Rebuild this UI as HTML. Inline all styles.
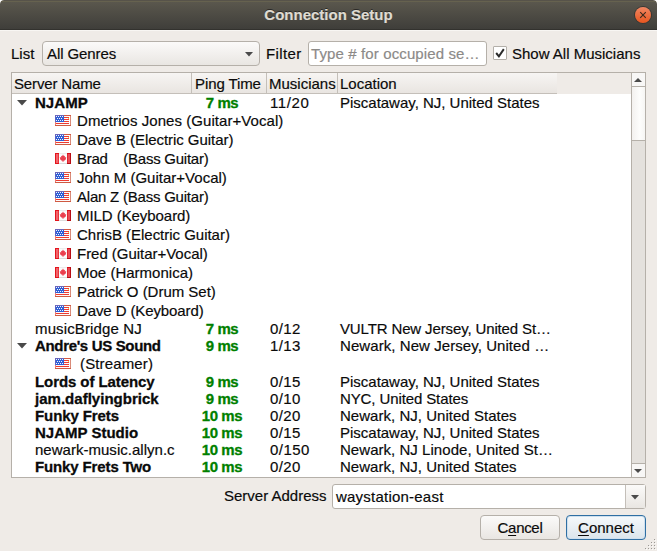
<!DOCTYPE html>
<html><head><meta charset="utf-8"><title>Connection Setup</title>
<style>
html,body{margin:0;padding:0;background:#fff;}
body{width:657px;height:551px;overflow:hidden;position:relative;font-family:"Liberation Sans", sans-serif;font-size:15px;color:#0a0a0a;-webkit-text-stroke:0.18px;}
#win{position:absolute;left:0;top:0;width:657px;height:551px;background:#efebe7;border-radius:4px 4px 0 0;overflow:hidden;}
#title{position:absolute;left:0;top:0;width:657px;height:30px;background:linear-gradient(#57534a 0,#57534a 1px,#66624f 1px,#66624f 2px,#5a574d 2px,#3f3e3a 29px,#33322e 29px,#33322e 30px);border-radius:4px 4px 0 0;box-shadow:0 1px 0 #f8f6f3;}
#title .tt{position:absolute;left:0;width:657px;top:6px;text-align:center;color:#dfdbd2;font-weight:bold;font-size:15px;line-height:18px;letter-spacing:0px;text-shadow:0 -1px 0 #2a2926;}
#close{position:absolute;left:635px;top:7px;width:16px;height:16px;border-radius:50%;background:linear-gradient(#f08763,#e8561f);box-shadow:0 0 0 1px #3a3733;}
.t{position:absolute;white-space:nowrap;line-height:20px;height:20px;}
.b{font-weight:bold;-webkit-text-stroke:0.3px;}
.g{color:#008000;}
.c1{left:35px;} .c2{left:192px;width:60px;text-align:center;} .c3{left:270px;} .c4{left:340px;}
.flag{position:absolute;left:55px;}
.arr{position:absolute;left:17px;}
#tree{position:absolute;left:11px;top:72px;width:633px;height:404px;background:#fff;border:1px solid #b5b0a9;}
.hd{position:absolute;top:73px;height:21px;background:linear-gradient(#f7f5f3,#e9e5e1);border-right:1px solid #c4bfb9;border-bottom:1px solid #c4bfb9;box-sizing:border-box;}
.hd span{position:absolute;left:2px;top:1px;line-height:20px;white-space:nowrap;}
.inp{position:absolute;background:#fff;border:1px solid #b5b0a9;border-radius:3px;box-sizing:border-box;}
u{text-underline-offset:2px;text-decoration-thickness:1px}
.btn{position:absolute;border:1px solid #b5b0a9;border-radius:4px;box-sizing:border-box;background:linear-gradient(#fbfaf9,#e9e6e2);text-align:center;line-height:23px;}
</style></head><body>
<div id="win">
<div id="title"><div class="tt">Connection Setup</div><div id="close"><svg width="16" height="16" viewBox="0 0 16 16" style="position:absolute;left:0;top:0"><path d="M5.2 5.2 L10.8 10.8 M10.8 5.2 L5.2 10.8" stroke="#3a2a1e" stroke-width="1.1" fill="none"/></svg></div></div>

<div class="t" style="left:11px;top:44px">List</div>
<div class="btn" style="left:42px;top:41px;width:218px;height:25px;text-align:left;"><span style="position:absolute;left:4px;top:0;line-height:24px;letter-spacing:-0.1px">All Genres</span><svg width="8" height="5" viewBox="0 0 8 5" style="position:absolute;left:202px;top:10px"><path d="M0 0 L8 0 L4 4.5 Z" fill="#4a4a4a"/></svg></div>
<div class="t" style="left:266px;top:44px;letter-spacing:0.4px">Filter</div>
<div class="inp" style="left:308px;top:41px;width:179px;height:25px"><span style="position:absolute;left:2px;top:0;line-height:24px;color:#8c8a88;white-space:nowrap;letter-spacing:0.12px">Type # for occupied se…</span></div>
<div style="position:absolute;left:493px;top:46px;width:14px;height:14px;box-sizing:border-box;border:1px solid #b3afa9;background:#fff;border-radius:1px"><svg width="12" height="12" viewBox="0 0 11 11" style="position:absolute;left:0;top:0"><path d="M2 5.5 L4.5 8.5 L9 2" stroke="#2a2a2a" stroke-width="1.8" fill="none"/></svg></div>
<div class="t" style="left:512px;top:44px">Show All Musicians</div>

<div id="tree"></div>
<div class="hd" style="left:12px;width:180px"><span style="letter-spacing:-0.15px">Server Name</span></div>
<div class="hd" style="left:192px;width:75px"><span style="left:3px;letter-spacing:-0.1px">Ping Time</span></div>
<div class="hd" style="left:267px;width:71px"><span>Musicians</span></div>
<div class="hd" style="left:338px;width:219px;border-right:none"><span>Location</span></div>
<svg class="arr" style="top:100px" width="10" height="6" viewBox="0 0 10 6"><path d="M0 0 L10 0 L5 5.5 Z" fill="#4a4a4a"/></svg><div class="t c1 b" style="top:93px;letter-spacing:0.04px">NJAMP</div><div class="t c2 b g" style="top:93px;letter-spacing:-0.43px">7 ms</div><div class="t c3" style="top:93px;letter-spacing:0.59px">11/20</div><div class="t c4" style="top:93px;letter-spacing:-0.01px">Piscataway, NJ, United States</div>
<svg class="flag" style="top:115px" width="16" height="11" viewBox="0 0 16 11" shape-rendering="crispEdges"><rect width="16" height="11" fill="#fdfbfb"/><g fill="#ee3b32"><rect x="9" y="2" width="5" height="1"/><rect x="9" y="4" width="5" height="1"/><rect x="9" y="6" width="5" height="1"/><rect x="1" y="8" width="13" height="1"/></g><rect x="9" y="0" width="7" height="1" fill="#d4583f"/><rect x="0" y="10" width="16" height="1" fill="#cf5a42"/><rect x="15" y="1" width="1" height="9" fill="#d98a78"/><rect x="0" y="7" width="1" height="3" fill="#ea7a70"/><rect x="0" y="0" width="9" height="7" fill="#2f5fd6"/><rect x="0" y="0" width="9" height="1" fill="#6b66bb"/><rect x="0" y="1" width="1" height="6" fill="#5b62c4"/><g fill="#f2f4fb"><rect x="1" y="1" width="1" height="1"/><rect x="3" y="1" width="1" height="1"/><rect x="5" y="1" width="1" height="1"/><rect x="7" y="1" width="1" height="1"/><rect x="2" y="3" width="1" height="1"/><rect x="4" y="3" width="1" height="1"/><rect x="6" y="3" width="1" height="1"/><rect x="1" y="5" width="1" height="1"/><rect x="3" y="5" width="1" height="1"/><rect x="5" y="5" width="1" height="1"/><rect x="7" y="5" width="1" height="1"/></g><rect x="13" y="3" width="1" height="1" fill="#f3d23a"/></svg><div class="t" style="top:111px;left:77px;letter-spacing:0.06px">Dmetrios Jones (Guitar+Vocal)</div>
<svg class="flag" style="top:134px" width="16" height="11" viewBox="0 0 16 11" shape-rendering="crispEdges"><rect width="16" height="11" fill="#fdfbfb"/><g fill="#ee3b32"><rect x="9" y="2" width="5" height="1"/><rect x="9" y="4" width="5" height="1"/><rect x="9" y="6" width="5" height="1"/><rect x="1" y="8" width="13" height="1"/></g><rect x="9" y="0" width="7" height="1" fill="#d4583f"/><rect x="0" y="10" width="16" height="1" fill="#cf5a42"/><rect x="15" y="1" width="1" height="9" fill="#d98a78"/><rect x="0" y="7" width="1" height="3" fill="#ea7a70"/><rect x="0" y="0" width="9" height="7" fill="#2f5fd6"/><rect x="0" y="0" width="9" height="1" fill="#6b66bb"/><rect x="0" y="1" width="1" height="6" fill="#5b62c4"/><g fill="#f2f4fb"><rect x="1" y="1" width="1" height="1"/><rect x="3" y="1" width="1" height="1"/><rect x="5" y="1" width="1" height="1"/><rect x="7" y="1" width="1" height="1"/><rect x="2" y="3" width="1" height="1"/><rect x="4" y="3" width="1" height="1"/><rect x="6" y="3" width="1" height="1"/><rect x="1" y="5" width="1" height="1"/><rect x="3" y="5" width="1" height="1"/><rect x="5" y="5" width="1" height="1"/><rect x="7" y="5" width="1" height="1"/></g><rect x="13" y="3" width="1" height="1" fill="#f3d23a"/></svg><div class="t" style="top:130px;left:77px;letter-spacing:-0.05px">Dave B (Electric Guitar)</div>
<svg class="flag" style="top:153px" width="16" height="11" viewBox="0 0 16 11"><rect width="16" height="11" fill="#fbfbfb"/><rect x="4" y="0" width="8" height="1" fill="#ececec"/><rect x="4" y="10" width="8" height="1" fill="#dcdcdc"/><rect width="4" height="11" fill="#e4141c"/><rect x="1" y="1" width="2.4" height="9" fill="#f0646c"/><rect x="12" width="4" height="11" fill="#d90f18"/><rect x="12.6" y="1" width="2.4" height="9" fill="#ea4a55"/><rect x="15" y="0" width="1" height="11" fill="#b80d14"/><rect x="12" y="10" width="4" height="1" fill="#b80d14"/><path d="M8 1.6 L9 3.2 L10 2.8 L9.8 4.4 L11.3 4 L10.8 5.5 L11.2 6 L9.2 7.8 L8.4 7.8 L8.4 9 L7.6 9 L7.6 7.8 L6.8 7.8 L4.8 6 L5.2 5.5 L4.7 4 L6.2 4.4 L6 2.8 L7 3.2 Z" fill="#ea3f4e"/></svg><div class="t" style="top:149px;left:77px;letter-spacing:-0.25px">Brad    (Bass Guitar)</div>
<svg class="flag" style="top:172px" width="16" height="11" viewBox="0 0 16 11" shape-rendering="crispEdges"><rect width="16" height="11" fill="#fdfbfb"/><g fill="#ee3b32"><rect x="9" y="2" width="5" height="1"/><rect x="9" y="4" width="5" height="1"/><rect x="9" y="6" width="5" height="1"/><rect x="1" y="8" width="13" height="1"/></g><rect x="9" y="0" width="7" height="1" fill="#d4583f"/><rect x="0" y="10" width="16" height="1" fill="#cf5a42"/><rect x="15" y="1" width="1" height="9" fill="#d98a78"/><rect x="0" y="7" width="1" height="3" fill="#ea7a70"/><rect x="0" y="0" width="9" height="7" fill="#2f5fd6"/><rect x="0" y="0" width="9" height="1" fill="#6b66bb"/><rect x="0" y="1" width="1" height="6" fill="#5b62c4"/><g fill="#f2f4fb"><rect x="1" y="1" width="1" height="1"/><rect x="3" y="1" width="1" height="1"/><rect x="5" y="1" width="1" height="1"/><rect x="7" y="1" width="1" height="1"/><rect x="2" y="3" width="1" height="1"/><rect x="4" y="3" width="1" height="1"/><rect x="6" y="3" width="1" height="1"/><rect x="1" y="5" width="1" height="1"/><rect x="3" y="5" width="1" height="1"/><rect x="5" y="5" width="1" height="1"/><rect x="7" y="5" width="1" height="1"/></g><rect x="13" y="3" width="1" height="1" fill="#f3d23a"/></svg><div class="t" style="top:168px;left:77px;letter-spacing:0.01px">John M (Guitar+Vocal)</div>
<svg class="flag" style="top:191px" width="16" height="11" viewBox="0 0 16 11" shape-rendering="crispEdges"><rect width="16" height="11" fill="#fdfbfb"/><g fill="#ee3b32"><rect x="9" y="2" width="5" height="1"/><rect x="9" y="4" width="5" height="1"/><rect x="9" y="6" width="5" height="1"/><rect x="1" y="8" width="13" height="1"/></g><rect x="9" y="0" width="7" height="1" fill="#d4583f"/><rect x="0" y="10" width="16" height="1" fill="#cf5a42"/><rect x="15" y="1" width="1" height="9" fill="#d98a78"/><rect x="0" y="7" width="1" height="3" fill="#ea7a70"/><rect x="0" y="0" width="9" height="7" fill="#2f5fd6"/><rect x="0" y="0" width="9" height="1" fill="#6b66bb"/><rect x="0" y="1" width="1" height="6" fill="#5b62c4"/><g fill="#f2f4fb"><rect x="1" y="1" width="1" height="1"/><rect x="3" y="1" width="1" height="1"/><rect x="5" y="1" width="1" height="1"/><rect x="7" y="1" width="1" height="1"/><rect x="2" y="3" width="1" height="1"/><rect x="4" y="3" width="1" height="1"/><rect x="6" y="3" width="1" height="1"/><rect x="1" y="5" width="1" height="1"/><rect x="3" y="5" width="1" height="1"/><rect x="5" y="5" width="1" height="1"/><rect x="7" y="5" width="1" height="1"/></g><rect x="13" y="3" width="1" height="1" fill="#f3d23a"/></svg><div class="t" style="top:187px;left:77px;letter-spacing:-0.22px">Alan Z (Bass Guitar)</div>
<svg class="flag" style="top:210px" width="16" height="11" viewBox="0 0 16 11"><rect width="16" height="11" fill="#fbfbfb"/><rect x="4" y="0" width="8" height="1" fill="#ececec"/><rect x="4" y="10" width="8" height="1" fill="#dcdcdc"/><rect width="4" height="11" fill="#e4141c"/><rect x="1" y="1" width="2.4" height="9" fill="#f0646c"/><rect x="12" width="4" height="11" fill="#d90f18"/><rect x="12.6" y="1" width="2.4" height="9" fill="#ea4a55"/><rect x="15" y="0" width="1" height="11" fill="#b80d14"/><rect x="12" y="10" width="4" height="1" fill="#b80d14"/><path d="M8 1.6 L9 3.2 L10 2.8 L9.8 4.4 L11.3 4 L10.8 5.5 L11.2 6 L9.2 7.8 L8.4 7.8 L8.4 9 L7.6 9 L7.6 7.8 L6.8 7.8 L4.8 6 L5.2 5.5 L4.7 4 L6.2 4.4 L6 2.8 L7 3.2 Z" fill="#ea3f4e"/></svg><div class="t" style="top:206px;left:77px;letter-spacing:-0.06px">MILD (Keyboard)</div>
<svg class="flag" style="top:229px" width="16" height="11" viewBox="0 0 16 11" shape-rendering="crispEdges"><rect width="16" height="11" fill="#fdfbfb"/><g fill="#ee3b32"><rect x="9" y="2" width="5" height="1"/><rect x="9" y="4" width="5" height="1"/><rect x="9" y="6" width="5" height="1"/><rect x="1" y="8" width="13" height="1"/></g><rect x="9" y="0" width="7" height="1" fill="#d4583f"/><rect x="0" y="10" width="16" height="1" fill="#cf5a42"/><rect x="15" y="1" width="1" height="9" fill="#d98a78"/><rect x="0" y="7" width="1" height="3" fill="#ea7a70"/><rect x="0" y="0" width="9" height="7" fill="#2f5fd6"/><rect x="0" y="0" width="9" height="1" fill="#6b66bb"/><rect x="0" y="1" width="1" height="6" fill="#5b62c4"/><g fill="#f2f4fb"><rect x="1" y="1" width="1" height="1"/><rect x="3" y="1" width="1" height="1"/><rect x="5" y="1" width="1" height="1"/><rect x="7" y="1" width="1" height="1"/><rect x="2" y="3" width="1" height="1"/><rect x="4" y="3" width="1" height="1"/><rect x="6" y="3" width="1" height="1"/><rect x="1" y="5" width="1" height="1"/><rect x="3" y="5" width="1" height="1"/><rect x="5" y="5" width="1" height="1"/><rect x="7" y="5" width="1" height="1"/></g><rect x="13" y="3" width="1" height="1" fill="#f3d23a"/></svg><div class="t" style="top:225px;left:77px;letter-spacing:-0.02px">ChrisB (Electric Guitar)</div>
<svg class="flag" style="top:248px" width="16" height="11" viewBox="0 0 16 11"><rect width="16" height="11" fill="#fbfbfb"/><rect x="4" y="0" width="8" height="1" fill="#ececec"/><rect x="4" y="10" width="8" height="1" fill="#dcdcdc"/><rect width="4" height="11" fill="#e4141c"/><rect x="1" y="1" width="2.4" height="9" fill="#f0646c"/><rect x="12" width="4" height="11" fill="#d90f18"/><rect x="12.6" y="1" width="2.4" height="9" fill="#ea4a55"/><rect x="15" y="0" width="1" height="11" fill="#b80d14"/><rect x="12" y="10" width="4" height="1" fill="#b80d14"/><path d="M8 1.6 L9 3.2 L10 2.8 L9.8 4.4 L11.3 4 L10.8 5.5 L11.2 6 L9.2 7.8 L8.4 7.8 L8.4 9 L7.6 9 L7.6 7.8 L6.8 7.8 L4.8 6 L5.2 5.5 L4.7 4 L6.2 4.4 L6 2.8 L7 3.2 Z" fill="#ea3f4e"/></svg><div class="t" style="top:244px;left:77px;letter-spacing:-0.03px">Fred (Guitar+Vocal)</div>
<svg class="flag" style="top:267px" width="16" height="11" viewBox="0 0 16 11"><rect width="16" height="11" fill="#fbfbfb"/><rect x="4" y="0" width="8" height="1" fill="#ececec"/><rect x="4" y="10" width="8" height="1" fill="#dcdcdc"/><rect width="4" height="11" fill="#e4141c"/><rect x="1" y="1" width="2.4" height="9" fill="#f0646c"/><rect x="12" width="4" height="11" fill="#d90f18"/><rect x="12.6" y="1" width="2.4" height="9" fill="#ea4a55"/><rect x="15" y="0" width="1" height="11" fill="#b80d14"/><rect x="12" y="10" width="4" height="1" fill="#b80d14"/><path d="M8 1.6 L9 3.2 L10 2.8 L9.8 4.4 L11.3 4 L10.8 5.5 L11.2 6 L9.2 7.8 L8.4 7.8 L8.4 9 L7.6 9 L7.6 7.8 L6.8 7.8 L4.8 6 L5.2 5.5 L4.7 4 L6.2 4.4 L6 2.8 L7 3.2 Z" fill="#ea3f4e"/></svg><div class="t" style="top:263px;left:77px;letter-spacing:0.01px">Moe (Harmonica)</div>
<svg class="flag" style="top:286px" width="16" height="11" viewBox="0 0 16 11" shape-rendering="crispEdges"><rect width="16" height="11" fill="#fdfbfb"/><g fill="#ee3b32"><rect x="9" y="2" width="5" height="1"/><rect x="9" y="4" width="5" height="1"/><rect x="9" y="6" width="5" height="1"/><rect x="1" y="8" width="13" height="1"/></g><rect x="9" y="0" width="7" height="1" fill="#d4583f"/><rect x="0" y="10" width="16" height="1" fill="#cf5a42"/><rect x="15" y="1" width="1" height="9" fill="#d98a78"/><rect x="0" y="7" width="1" height="3" fill="#ea7a70"/><rect x="0" y="0" width="9" height="7" fill="#2f5fd6"/><rect x="0" y="0" width="9" height="1" fill="#6b66bb"/><rect x="0" y="1" width="1" height="6" fill="#5b62c4"/><g fill="#f2f4fb"><rect x="1" y="1" width="1" height="1"/><rect x="3" y="1" width="1" height="1"/><rect x="5" y="1" width="1" height="1"/><rect x="7" y="1" width="1" height="1"/><rect x="2" y="3" width="1" height="1"/><rect x="4" y="3" width="1" height="1"/><rect x="6" y="3" width="1" height="1"/><rect x="1" y="5" width="1" height="1"/><rect x="3" y="5" width="1" height="1"/><rect x="5" y="5" width="1" height="1"/><rect x="7" y="5" width="1" height="1"/></g><rect x="13" y="3" width="1" height="1" fill="#f3d23a"/></svg><div class="t" style="top:282px;left:77px;letter-spacing:-0.02px">Patrick O (Drum Set)</div>
<svg class="flag" style="top:305px" width="16" height="11" viewBox="0 0 16 11" shape-rendering="crispEdges"><rect width="16" height="11" fill="#fdfbfb"/><g fill="#ee3b32"><rect x="9" y="2" width="5" height="1"/><rect x="9" y="4" width="5" height="1"/><rect x="9" y="6" width="5" height="1"/><rect x="1" y="8" width="13" height="1"/></g><rect x="9" y="0" width="7" height="1" fill="#d4583f"/><rect x="0" y="10" width="16" height="1" fill="#cf5a42"/><rect x="15" y="1" width="1" height="9" fill="#d98a78"/><rect x="0" y="7" width="1" height="3" fill="#ea7a70"/><rect x="0" y="0" width="9" height="7" fill="#2f5fd6"/><rect x="0" y="0" width="9" height="1" fill="#6b66bb"/><rect x="0" y="1" width="1" height="6" fill="#5b62c4"/><g fill="#f2f4fb"><rect x="1" y="1" width="1" height="1"/><rect x="3" y="1" width="1" height="1"/><rect x="5" y="1" width="1" height="1"/><rect x="7" y="1" width="1" height="1"/><rect x="2" y="3" width="1" height="1"/><rect x="4" y="3" width="1" height="1"/><rect x="6" y="3" width="1" height="1"/><rect x="1" y="5" width="1" height="1"/><rect x="3" y="5" width="1" height="1"/><rect x="5" y="5" width="1" height="1"/><rect x="7" y="5" width="1" height="1"/></g><rect x="13" y="3" width="1" height="1" fill="#f3d23a"/></svg><div class="t" style="top:301px;left:77px;letter-spacing:-0.11px">Dave D (Keyboard)</div>
<div class="t c1" style="top:319px;letter-spacing:0.13px">musicBridge NJ</div><div class="t c2 b g" style="top:319px;letter-spacing:-0.43px">7 ms</div><div class="t c3" style="top:319px;letter-spacing:0.40px">0/12</div><div class="t c4" style="top:319px;letter-spacing:-0.13px">VULTR New Jersey, United St…</div>
<svg class="arr" style="top:343px" width="10" height="6" viewBox="0 0 10 6"><path d="M0 0 L10 0 L5 5.5 Z" fill="#4a4a4a"/></svg><div class="t c1 b" style="top:336px;letter-spacing:-0.34px">Andre's US Sound</div><div class="t c2 b g" style="top:336px;letter-spacing:-0.43px">9 ms</div><div class="t c3" style="top:336px;letter-spacing:0.40px">1/13</div><div class="t c4" style="top:336px;letter-spacing:0.07px">Newark, New Jersey, United …</div>
<svg class="flag" style="top:358px" width="16" height="11" viewBox="0 0 16 11" shape-rendering="crispEdges"><rect width="16" height="11" fill="#fdfbfb"/><g fill="#ee3b32"><rect x="9" y="2" width="5" height="1"/><rect x="9" y="4" width="5" height="1"/><rect x="9" y="6" width="5" height="1"/><rect x="1" y="8" width="13" height="1"/></g><rect x="9" y="0" width="7" height="1" fill="#d4583f"/><rect x="0" y="10" width="16" height="1" fill="#cf5a42"/><rect x="15" y="1" width="1" height="9" fill="#d98a78"/><rect x="0" y="7" width="1" height="3" fill="#ea7a70"/><rect x="0" y="0" width="9" height="7" fill="#2f5fd6"/><rect x="0" y="0" width="9" height="1" fill="#6b66bb"/><rect x="0" y="1" width="1" height="6" fill="#5b62c4"/><g fill="#f2f4fb"><rect x="1" y="1" width="1" height="1"/><rect x="3" y="1" width="1" height="1"/><rect x="5" y="1" width="1" height="1"/><rect x="7" y="1" width="1" height="1"/><rect x="2" y="3" width="1" height="1"/><rect x="4" y="3" width="1" height="1"/><rect x="6" y="3" width="1" height="1"/><rect x="1" y="5" width="1" height="1"/><rect x="3" y="5" width="1" height="1"/><rect x="5" y="5" width="1" height="1"/><rect x="7" y="5" width="1" height="1"/></g><rect x="13" y="3" width="1" height="1" fill="#f3d23a"/></svg><div class="t" style="top:354px;left:80px;letter-spacing:0.14px">(Streamer)</div>
<div class="t c1 b" style="top:372px;letter-spacing:-0.08px">Lords of Latency</div><div class="t c2 b g" style="top:372px;letter-spacing:-0.43px">9 ms</div><div class="t c3" style="top:372px;letter-spacing:0.40px">0/15</div><div class="t c4" style="top:372px;letter-spacing:-0.01px">Piscataway, NJ, United States</div>
<div class="t c1 b" style="top:389px;letter-spacing:0.02px">jam.daflyingbrick</div><div class="t c2 b g" style="top:389px;letter-spacing:-0.43px">9 ms</div><div class="t c3" style="top:389px;letter-spacing:0.40px">0/10</div><div class="t c4" style="top:389px;letter-spacing:-0.11px">NYC, United States</div>
<div class="t c1 b" style="top:406px;letter-spacing:-0.09px">Funky Frets</div><div class="t c2 b g" style="top:406px;letter-spacing:-0.45px">10 ms</div><div class="t c3" style="top:406px;letter-spacing:0.40px">0/20</div><div class="t c4" style="top:406px;letter-spacing:0.03px">Newark, NJ, United States</div>
<div class="t c1 b" style="top:423px;letter-spacing:0.00px">NJAMP Studio</div><div class="t c2 b g" style="top:423px;letter-spacing:-0.45px">10 ms</div><div class="t c3" style="top:423px;letter-spacing:0.40px">0/15</div><div class="t c4" style="top:423px;letter-spacing:-0.01px">Piscataway, NJ, United States</div>
<div class="t c1" style="top:440px;letter-spacing:0.02px">newark-music.allyn.c</div><div class="t c2 b g" style="top:440px;letter-spacing:-0.45px">10 ms</div><div class="t c3" style="top:440px;letter-spacing:0.45px">0/150</div><div class="t c4" style="top:440px;letter-spacing:0.04px">Newark, NJ Linode, United St…</div>
<div class="t c1 b" style="top:457px;letter-spacing:-0.13px">Funky Frets Two</div><div class="t c2 b g" style="top:457px;letter-spacing:-0.45px">10 ms</div><div class="t c3" style="top:457px;letter-spacing:0.40px">0/20</div><div class="t c4" style="top:457px;letter-spacing:0.03px">Newark, NJ, United States</div>
<!-- scrollbar -->
<div style="position:absolute;left:557px;top:73px;width:74px;height:21px;background:#efebe7"></div>
<div style="position:absolute;left:631px;top:73px;width:13px;height:404px;background:#e4e1dd;border-left:1px solid #b5b0a9"></div>
<div style="position:absolute;left:632px;top:73px;width:13px;height:13px;background:#f8f7f6;border-bottom:1px solid #b5b0a9"><svg width="8" height="4" viewBox="0 0 8 4" style="position:absolute;left:2px;top:5px"><path d="M0 4 L8 4 L4 0 Z" fill="#4a4a4a"/></svg></div>
<div style="position:absolute;left:632px;top:87px;width:13px;height:53px;background:linear-gradient(90deg,#f3f1ef,#fdfdfc 60%,#f6f5f3);border-bottom:1px solid #b5b0a9"></div>
<div style="position:absolute;left:632px;top:463px;width:13px;height:13px;background:#f8f7f6;border-top:1px solid #b5b0a9"><svg width="8" height="4" viewBox="0 0 8 4" style="position:absolute;left:2px;top:5px"><path d="M0 0 L8 0 L4 4 Z" fill="#4a4a4a"/></svg></div>

<div class="t" style="left:224px;top:486px">Server Address</div>
<div class="inp" style="left:332px;top:484px;width:314px;height:25px"><span style="position:absolute;left:3px;top:0;line-height:24px;letter-spacing:0.22px">waystation-east</span><div style="position:absolute;right:0;top:0;width:19px;height:23px;border-left:1px solid #c4bfb9;background:linear-gradient(#fbfaf9,#e9e6e2)"><svg width="8" height="5" viewBox="0 0 8 5" style="position:absolute;left:5px;top:10px"><path d="M0 0 L8 0 L4 4.5 Z" fill="#4a4a4a"/></svg></div></div>
<div class="btn" style="left:480px;top:515px;width:80px;height:25px;letter-spacing:-0.3px">C<u>a</u>ncel</div>
<div class="btn" style="left:566px;top:515px;width:80px;height:25px;border-color:#2f6fa3;box-shadow:inset 0 0 0 1px #cfe0ee;background:linear-gradient(#f6f9fb,#dbe5ec)"><u>C</u>onnect</div>
<svg width="657" height="551" style="position:absolute;left:0;top:0;pointer-events:none" shape-rendering="crispEdges"><rect x="655" y="540" width="1" height="1" fill="#fbfaf9"/><rect x="654" y="539" width="1" height="1" fill="#9b9894"/><rect x="652" y="543" width="1" height="1" fill="#fbfaf9"/><rect x="651" y="542" width="1" height="1" fill="#9b9894"/><rect x="655" y="543" width="1" height="1" fill="#fbfaf9"/><rect x="654" y="542" width="1" height="1" fill="#9b9894"/><rect x="649" y="546" width="1" height="1" fill="#fbfaf9"/><rect x="648" y="545" width="1" height="1" fill="#9b9894"/><rect x="652" y="546" width="1" height="1" fill="#fbfaf9"/><rect x="651" y="545" width="1" height="1" fill="#9b9894"/><rect x="655" y="546" width="1" height="1" fill="#fbfaf9"/><rect x="654" y="545" width="1" height="1" fill="#9b9894"/><rect x="646" y="549" width="1" height="1" fill="#fbfaf9"/><rect x="645" y="548" width="1" height="1" fill="#9b9894"/><rect x="649" y="549" width="1" height="1" fill="#fbfaf9"/><rect x="648" y="548" width="1" height="1" fill="#9b9894"/><rect x="652" y="549" width="1" height="1" fill="#fbfaf9"/><rect x="651" y="548" width="1" height="1" fill="#9b9894"/><rect x="655" y="549" width="1" height="1" fill="#fbfaf9"/><rect x="654" y="548" width="1" height="1" fill="#9b9894"/></svg>
</div>
</body></html>
